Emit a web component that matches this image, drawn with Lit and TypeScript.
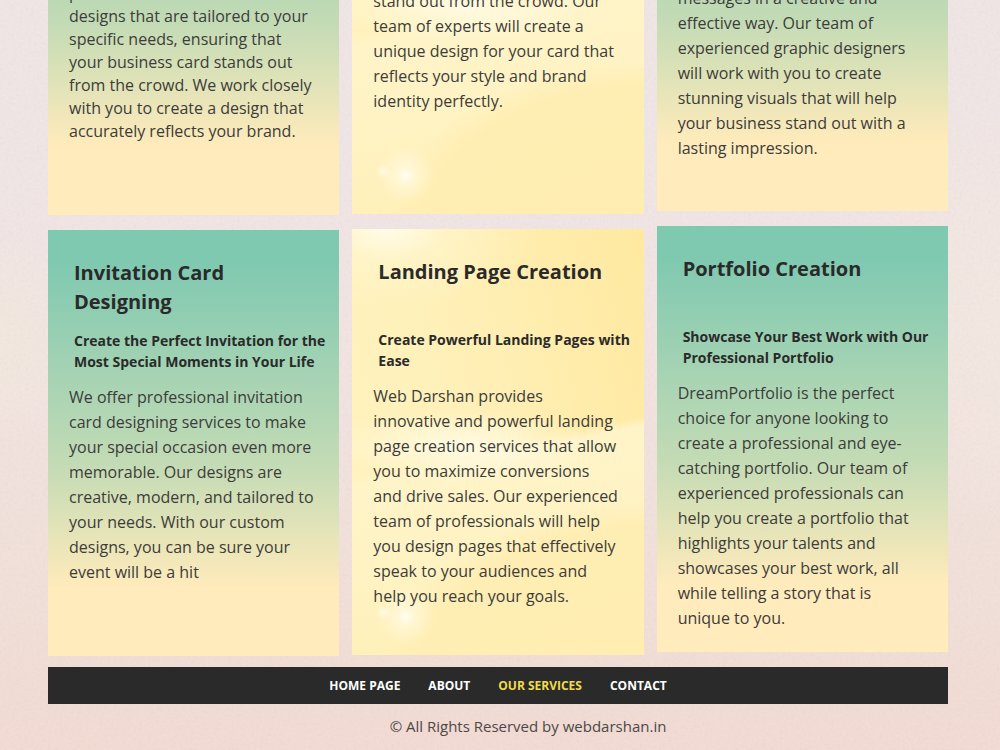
import { LitElement, html, svg, css } from "lit";
import { customElement, property } from "lit/decorators.js";
import { classMap } from "lit/directives/class-map.js";

interface Service {
  title?: string;
  tagline?: string;
  body: string;
}

interface Column {
  tone: "mint" | "sun";
  name: "first" | "second" | "third";
  services: Service[];
}

const COLUMNS: Column[] = [
  {
    tone: "mint",
    name: "first",
    services: [
      {
        body: "professional and memorable designs that are tailored to your specific needs, ensuring that your business card stands out from the crowd. We work closely with you to create a design that accurately reflects your brand.",
      },
      {
        title: "Invitation Card Designing",
        tagline: "Create the Perfect Invitation for the Most Special Moments in Your Life",
        body: "We offer professional invitation card designing services to make your special occasion even more memorable. Our designs are creative, modern, and tailored to your needs. With our custom designs, you can be sure your event will be a hit",
      },
    ],
  },
  {
    tone: "sun",
    name: "second",
    services: [
      {
        body: "stand out from the crowd. Our team of experts will create a unique design for your card that reflects your style and brand identity perfectly.",
      },
      {
        title: "Landing Page Creation",
        tagline: "Create Powerful Landing Pages with Ease",
        body: "Web Darshan provides innovative and powerful landing page creation services that allow you to maximize conversions and drive sales. Our experienced team of professionals will help you design pages that effectively speak to your audiences and help you reach your goals.",
      },
    ],
  },
  {
    tone: "mint",
    name: "third",
    services: [
      {
        body: "messages in a creative and effective way. Our team of experienced graphic designers will work with you to create stunning visuals that will help your business stand out with a lasting impression.",
      },
      {
        title: "Portfolio Creation",
        tagline: "Showcase Your Best Work with Our Professional Portfolio",
        body: "DreamPortfolio is the perfect choice for anyone looking to create a professional and eye-catching portfolio. Our team of experienced professionals can help you create a portfolio that highlights your talents and showcases your best work, all while telling a story that is unique to you.",
      },
    ],
  },
];

const LINKS = [
  { label: "HOME PAGE", href: "#home" },
  { label: "ABOUT", href: "#about" },
  { label: "OUR SERVICES", href: "#services", current: true },
  { label: "CONTACT", href: "#contact" },
];

@customElement("service-card")
export class ServiceCard extends LitElement {
  @property({ attribute: false }) service!: Service;
  @property() tone = "mint";

  static styles = css`
    :host {
      display: block;
    }
    .card {
      box-sizing: border-box;
      height: 100%;
      min-height: 426px;
      padding: 28px 12px 20px 21px;
      display: flex;
      flex-direction: column;
      color: #2a2a2a;
    }
    .mint {
      background: linear-gradient(#80c9b1 8%, #c3dbb5 55%, #ffebbb 84%);
    }
    .sun {
      background:
        radial-gradient(circle at 54px 91%, #fffdf2 0, #fffbe699 8px, transparent 28px),
        radial-gradient(circle at 31px 90%, #fffef5aa 0, transparent 7px),
        radial-gradient(ellipse 150px 80px at 35px 0, #fffbe8 0, #fff7d288 40%, transparent 100%),
        radial-gradient(ellipse 130px 36px at 110px 51%, #fffbe4 0, transparent 100%),
        radial-gradient(ellipse 255px 170px at 100% 104%, #ffedb0 0, #ffeeb3 85%, #fff2c000 100%),
        linear-gradient(168deg, transparent 51%, #fff4c8 53%, #fff3c4 70%, #fff0b8 90%),
        linear-gradient(75deg, #fff3c0 0, #fff0b8 45%, #ffe9a0 100%);
    }
    .untitled {
      justify-content: flex-end;
      padding-bottom: var(--card-end, 72px);
    }
    .title {
      margin: 0 11px 14px 5px;
      min-height: 58px;
      font-size: 20px;
      line-height: 29px;
      font-weight: 700;
    }
    .tagline {
      margin: 0 0 13px 5px;
      min-height: 42px;
      font-size: 14px;
      line-height: 21px;
      font-weight: 700;
    }
    .body {
      margin: 0 11px 0 0;
      font-size: 16px;
      line-height: var(--body-line, 25px);
      color: #3c3c3a;
    }
  `;

  render() {
    const { title, tagline, body } = this.service;
    return html`
      <article
        class=${classMap({ card: true, mint: this.tone === "mint", sun: this.tone === "sun", untitled: !title })}
      >
        ${title ? html`<h2 class="title">${title}</h2>` : null}
        ${tagline ? html`<p class="tagline">${tagline}</p>` : null}
        <p class="body">${body}</p>
      </article>
    `;
  }
}

@customElement("app-root")
export class AppRoot extends LitElement {
  static styles = css`
    :host {
      position: relative;
      display: flex;
      flex-direction: column;
      justify-content: flex-end;
      box-sizing: border-box;
      height: 100vh;
      overflow: hidden;
      padding: 0 52px 13px 48px;
      font-family: "Open Sans", "Noto Sans", sans-serif;
      background:
        radial-gradient(ellipse 8% 14% at 0 45%, #f3e9df 0, #f3e9df00 100%),
        radial-gradient(ellipse 14% 30% at 100% 42%, #f4e9e2 0, #f4e9e200 100%),
        linear-gradient(#f0e6e6 0, #f1e6e5 28%, #f3e4e1 50%, #f2e0d9 80%, #f3dbd3 100%);
    }
    .grain {
      position: absolute;
      inset: 0;
      width: 100%;
      height: 100%;
      opacity: 0.09;
    }
    .services {
      position: relative;
      display: grid;
      grid-template-columns: repeat(3, 1fr);
      align-items: end;
      gap: 13px;
      margin-bottom: 11px;
    }
    .column {
      display: grid;
      gap: 15px;
    }
    .second {
      padding-bottom: 1px;
    }
    .third {
      padding-bottom: 4px;
    }
    .first service-card:first-child {
      --card-end: 72px;
      --body-line: 23px;
    }
    .second service-card:first-child {
      --card-end: 100px;
    }
    .third service-card:first-child {
      --card-end: 50px;
    }
    .nav {
      position: relative;
      display: flex;
      justify-content: center;
      gap: 28px;
      background: #2a2a2a;
      font-size: 12px;
      line-height: 37px;
      font-weight: 700;
    }
    .link {
      color: #ffffff;
      text-decoration: none;
    }
    .current {
      color: #eedc4c;
    }
    .legal {
      position: relative;
      margin: 12px 0 0;
      padding-left: 60px;
      text-align: center;
      font-size: 15px;
      line-height: 21px;
      color: #4c4847;
    }
  `;

  render() {
    return html`
      <svg class="grain" aria-hidden="true">
        ${svg`
          <filter id="grain">
            <feTurbulence type="fractalNoise" baseFrequency="0.35" numOctaves="3" seed="4"></feTurbulence>
            <feColorMatrix type="saturate" values="0.3"></feColorMatrix>
          </filter>
          <rect width="100%" height="100%" filter="url(#grain)"></rect>
        `}
      </svg>
      <main class="services">
        ${COLUMNS.map(
          (column) => html`
            <div class="column ${column.name}">
              ${column.services.map(
                (service) => html`<service-card .service=${service} tone=${column.tone}></service-card>`,
              )}
            </div>
          `,
        )}
      </main>
      <nav class="nav" aria-label="Footer">
        ${LINKS.map(
          (link) => html`<a class=${classMap({ link: true, current: !!link.current })} href=${link.href}>${link.label}</a>`,
        )}
      </nav>
      <p class="legal">© All Rights Reserved by webdarshan.in</p>
    `;
  }
}
